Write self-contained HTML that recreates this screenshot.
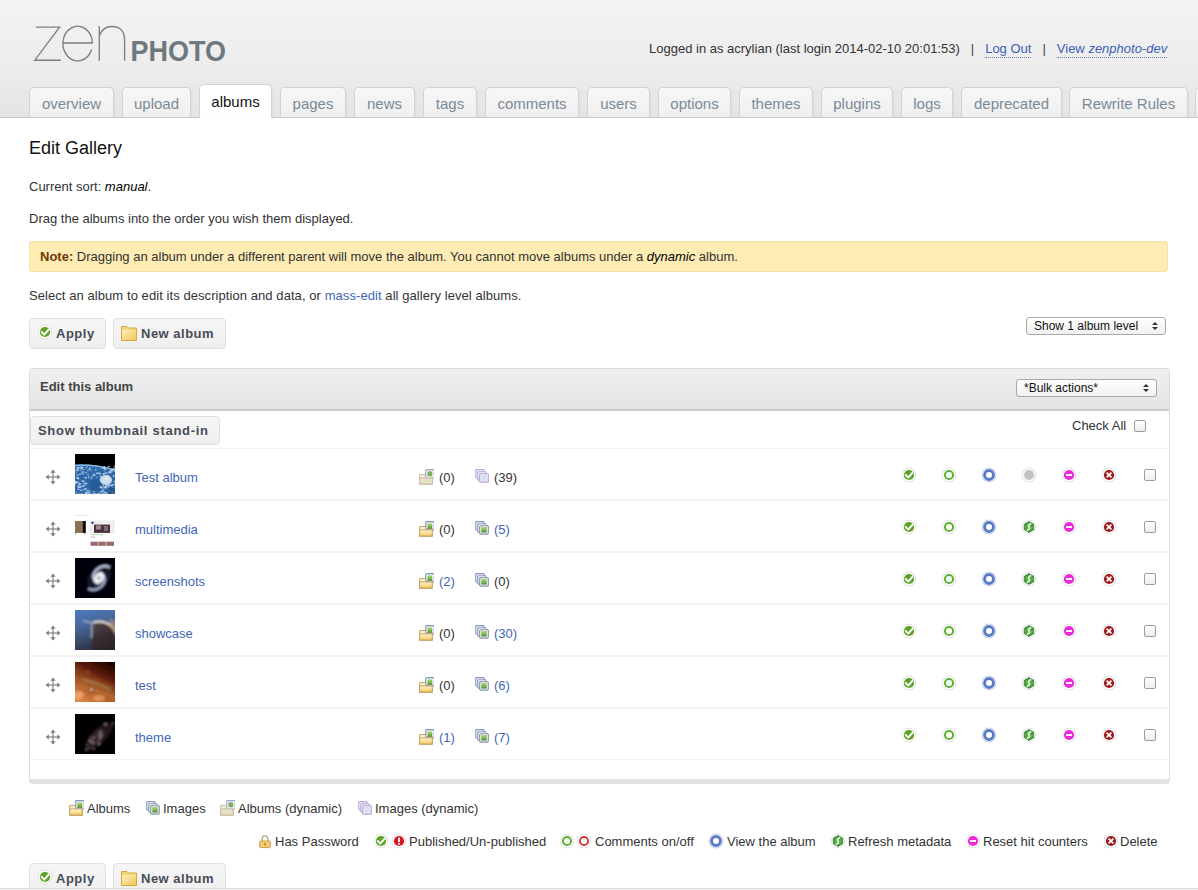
<!DOCTYPE html>
<html><head><meta charset="utf-8">
<style>
*{box-sizing:border-box;margin:0;padding:0}
html,body{width:1198px;height:890px;overflow:hidden;background:#fff}
body{font-family:"Liberation Sans",sans-serif;font-size:13px;color:#333;position:relative}
.abs{position:absolute}
.t{position:absolute;white-space:nowrap;font-size:13px;line-height:16px;color:#333}
.lnk{color:#3f66b8}
.ic{position:absolute;overflow:visible}
#hdr{position:absolute;left:0;top:0;width:1198px;height:118px;background:linear-gradient(#f3f3f3 0%,#ececec 60%,#e4e4e4 100%);border-bottom:1px solid #cbcbcb}
#login{position:absolute;left:649px;top:41px;font-size:13px;line-height:16px;color:#333;white-space:nowrap}
#login a{color:#3b5fb7;text-decoration:none;border-bottom:1px dotted #6a84c6;padding-bottom:1px}
#login .sp{margin:0 11px;color:#444}
.tab{position:absolute;top:87px;height:30px;background:linear-gradient(#f7f7f7,#efefef);border:1px solid #d3d3d3;border-bottom:none;border-radius:5px 5px 0 0;font-size:15px;color:#7b8a97;text-align:center;line-height:32px;box-shadow:1px 0 2px rgba(0,0,0,0.04)}
.tab.on{top:84px;height:34px;background:#fff;color:#111;line-height:33px}
h1{position:absolute;left:29px;top:138px;font-size:18px;line-height:21px;font-weight:normal;color:#111}
.p{position:absolute;left:29px;font-size:13px;line-height:16px;color:#333;white-space:nowrap}
.note{position:absolute;left:29px;top:241px;width:1139px;height:31px;background:#feecb4;border:1px solid #f7dea5;border-radius:3px;padding-left:10px;line-height:29px;color:#333;white-space:nowrap}
.note b{color:#6e3b06}
a{color:#3f66b8;text-decoration:none}
.btn{position:absolute;height:31px;background:linear-gradient(#f6f6f6,#efefef);border:1px solid #e0e0e0;border-radius:4px;font-weight:bold;font-size:13px;color:#474c54;line-height:29px;letter-spacing:0.5px;white-space:nowrap}
.btn .ic{top:7px}
.sel{position:absolute;height:18px;background:linear-gradient(#ffffff,#f1f1f1);border:1px solid #a8a8a8;border-radius:3px;font-size:12px;color:#111;line-height:16px;padding-left:7px;white-space:nowrap}
.sel:after{content:"";position:absolute;right:7px;top:4px;width:0;height:0;border-left:3px solid transparent;border-right:3px solid transparent;border-bottom:3px solid #333}
.sel:before{content:"";position:absolute;right:7px;top:9px;width:0;height:0;border-left:3px solid transparent;border-right:3px solid transparent;border-top:3px solid #333}
#panel{position:absolute;left:29px;top:368px;width:1141px;height:416px;border:1px solid #dcdcdc;border-bottom:5px solid #e2e2e2;border-radius:4px;background:#fff}
#ph{position:absolute;left:0;top:0;width:1139px;height:42px;background:linear-gradient(#f0f0f0,#e4e4e4);border-bottom:2px solid #cccccc;border-radius:4px 4px 0 0}
.sep{position:absolute;left:30px;width:1138px;height:1px;background:#f3f3f3}
.thumb{position:absolute;left:75px;width:40px;height:40px}
.name{color:#3f66b8}
.cb{position:absolute;width:12px;height:12px;border:1px solid #9c9c9c;border-radius:2px;background:linear-gradient(#ffffff,#ededed)}
.earth{background:radial-gradient(ellipse at 85% 60%,#e6eef5 0,#9fc3e0 12%,transparent 30%),radial-gradient(ellipse 120% 90% at 80% 110%,#2b5d8e 0,#3a74a8 55%,#5f9bcf 75%,#9ccbe8 80%,#000 82%)}
.multi{background:linear-gradient(#fff,#fff)}
.galaxy{background:radial-gradient(circle at 55% 48%,#fff 0,#d0d6e6 10%,#6a7aa0 24%,#1a2036 40%,#06070f 60%)}
.nebula{background:radial-gradient(ellipse at 70% 25%,#f4efe6 0,#b8a99a 12%,transparent 25%),linear-gradient(100deg,#4a6fa8 0%,#3f5f93 45%,#2d3d5e 70%,#201a1e 100%)}
.jupiter{background:radial-gradient(circle at 40% 70%,#f0c896 0,#e8a66a 8%,transparent 16%),linear-gradient(160deg,#6a2a08 0%,#b85a22 30%,#d98a4e 55%,#b4521c 75%,#7a2e0c 100%)}
.dark{background:radial-gradient(ellipse at 55% 50%,#6c5460 0,#3a2a30 25%,#120c10 55%,#050405 80%)}

</style></head><body>
<svg width="0" height="0" style="position:absolute">
<defs>
 <symbol id="halo" viewBox="0 0 16 16"><circle cx="8" cy="8" r="6.9" fill="#fbfbfb" stroke="#e2e2e2" stroke-width="1"/></symbol>
 <symbol id="chk" viewBox="0 0 16 16"><use href="#halo"/><circle cx="8" cy="8" r="5.1" fill="#5ba225"/><path d="M4.2,7.4 L7.3,10.6 L12,5.1" fill="none" stroke="#fff" stroke-width="2"/></symbol>
 <symbol id="ring_g" viewBox="0 0 16 16"><use href="#halo"/><circle cx="8" cy="8" r="4.1" fill="#fff" stroke="#56b42e" stroke-width="2"/></symbol>
 <symbol id="ring_b" viewBox="0 0 16 16"><circle cx="8" cy="8" r="6.9" fill="#fff" stroke="#cdd5ea" stroke-width="1.1"/><circle cx="8" cy="8" r="4.45" fill="#fff" stroke="#5a79c6" stroke-width="2.9"/></symbol>
 <symbol id="gray" viewBox="0 0 16 16"><use href="#halo"/><circle cx="8" cy="8" r="5" fill="#c4c4c4"/></symbol>
 <symbol id="refresh" viewBox="0 0 16 16"><use href="#halo"/><path d="M8,2.6 L12.7,5.3 V10.7 L8,13.4 L3.3,10.7 V5.3Z" fill="#3d8a35" stroke="#3d8a35" stroke-width="0.8" stroke-linejoin="round"/><circle cx="8" cy="8" r="3.8" fill="#5cb04c"/><path d="M10.2,4.4 Q6.4,6 8,8 Q9.6,10 5.8,11.6" fill="none" stroke="#fff" stroke-width="1.4"/></symbol>
 <symbol id="minus" viewBox="0 0 16 16"><use href="#halo"/><circle cx="8" cy="8" r="5.1" fill="#ec2ad8"/><rect x="5" y="7.1" width="6" height="1.9" fill="#fff"/></symbol>
 <symbol id="xdel" viewBox="0 0 16 16"><use href="#halo"/><circle cx="8" cy="8" r="5.1" fill="#9b1a1c"/><path d="M5.6,5.6 L10.4,10.4 M10.4,5.6 L5.6,10.4" stroke="#fff" stroke-width="1.7"/></symbol>
 <symbol id="excl" viewBox="0 0 16 16"><use href="#halo"/><circle cx="8" cy="8" r="5.1" fill="#d11a25"/><rect x="7.1" y="4.6" width="1.8" height="4.3" fill="#fff"/><rect x="7.1" y="9.9" width="1.8" height="1.7" fill="#fff"/></symbol>
 <symbol id="ring_r" viewBox="0 0 16 16"><use href="#halo"/><circle cx="8" cy="8" r="4.1" fill="#fff" stroke="#d43c3c" stroke-width="2"/></symbol>
 <symbol id="drag" viewBox="0 0 16 16"><g fill="#7c7c7c"><rect x="7.45" y="3" width="1.1" height="10"/><rect x="3" y="7.45" width="10" height="1.1"/><path d="M8,0.6 L10.6,3.8 L5.4,3.8Z M8,15.4 L10.6,12.2 L5.4,12.2Z M0.6,8 L3.8,5.4 L3.8,10.6Z M15.4,8 L12.2,5.4 L12.2,10.6Z"/></g></symbol>
 <symbol id="fold" viewBox="0 0 16 16"><linearGradient id="fy" x1="0" y1="0" x2="0" y2="1"><stop offset="0" stop-color="#fff8d0"/><stop offset="1" stop-color="#f0c860"/></linearGradient><linearGradient id="tg" x1="0" y1="0" x2="0" y2="1"><stop offset="0" stop-color="#b4e070"/><stop offset="1" stop-color="#5ca032"/></linearGradient><rect x="1.6" y="5.5" width="12.7" height="9.6" rx="0.6" fill="#fbf0c0" stroke="#c9a46a" stroke-width="1.1"/><rect x="7.7" y="0.6" width="8.6" height="8.4" rx="0.8" fill="#e6f0fa" stroke="#8796c0" stroke-width="1.1"/><rect x="9.4" y="2.2" width="4.8" height="5" rx="1.5" fill="url(#tg)"/><rect x="9" y="7" width="5.5" height="1" fill="#8a8a40"/><path d="M1.6,9 H14.3 V15.1 H1.6Z" fill="url(#fy)" stroke="#c9a46a" stroke-width="1.1"/></symbol>
 <symbol id="fold_dim" viewBox="0 0 16 16"><rect x="1.6" y="5.5" width="12.7" height="9.6" rx="0.6" fill="#f0eedc" stroke="#d0bca8" stroke-width="1.1"/><rect x="7.7" y="0.6" width="8.6" height="8.4" rx="0.8" fill="#eef0f6" stroke="#a6a8cc" stroke-width="1.1"/><rect x="9.4" y="2.2" width="4.8" height="5" rx="1.5" fill="#7cb060"/><path d="M1.6,9 H14.3 V15.1 H1.6Z" fill="#e4e2c4" stroke="#d0bca8" stroke-width="1.1"/></symbol>
 <symbol id="imgs" viewBox="0 0 16 16"><linearGradient id="tg2" x1="0" y1="0" x2="0" y2="1"><stop offset="0" stop-color="#b0dc6c"/><stop offset="1" stop-color="#4e9430"/></linearGradient><rect x="1.7" y="1.6" width="8.4" height="8.4" rx="0.8" fill="#eef4fb" stroke="#8e98b4" stroke-width="1.1"/><rect x="3.7" y="3.7" width="8.4" height="8.4" rx="0.8" fill="#eef4fb" stroke="#8e98b4" stroke-width="1.1"/><rect x="5.7" y="5.7" width="8.6" height="8.4" rx="0.8" fill="#eef4fb" stroke="#8690ac" stroke-width="1.1"/><rect x="7.3" y="7" width="5.4" height="5.6" fill="url(#tg2)"/></symbol>
 <symbol id="imgs_dim" viewBox="0 0 16 16"><rect x="1.7" y="1.6" width="8.4" height="8.4" rx="0.8" fill="#f4f0fa" stroke="#bcaad8" stroke-width="1.1"/><rect x="3.7" y="3.7" width="8.4" height="8.4" rx="0.8" fill="#f4f0fa" stroke="#bcaad8" stroke-width="1.1"/><rect x="5.7" y="5.7" width="8.6" height="8.4" rx="0.8" fill="#f4f0fa" stroke="#b4a2d4" stroke-width="1.1"/><rect x="7.3" y="7" width="5.4" height="5.6" fill="#d4e2f0"/></symbol>
 <symbol id="folder" viewBox="0 0 16 16"><linearGradient id="fg" x1="0" y1="0" x2="1" y2="1"><stop offset="0" stop-color="#fdf0b8"/><stop offset="1" stop-color="#f1c55a"/></linearGradient><path d="M0.5,1.5 H6 L7.5,3 H15.5 V15.5 H0.5Z" fill="#f5d87c" stroke="#d8a742"/><path d="M1,5 H15 V15 H1Z" fill="url(#fg)"/></symbol>
 <symbol id="lock" viewBox="0 0 16 16"><path d="M5.2,8 V5.6 A2.8,2.8 0 0 1 10.8,5.6 V8" fill="none" stroke="#b8a078" stroke-width="1.3"/><rect x="2.7" y="8" width="10.6" height="6.6" rx="0.8" fill="#f4cc70" stroke="#cfa050" stroke-width="1"/><rect x="7.3" y="10" width="1.4" height="2.4" fill="#a07830"/></symbol>
</defs>
</svg>
<div id="hdr">
  <svg class="ic" style="left:0;top:0" width="240" height="70" viewBox="0 0 240 70">
    <g fill="none" stroke="#7a7f84" stroke-width="1.35">
      <path d="M35.8,27.1 H59.6 L34.8,60.2 H60.8"/>
      <path d="M63,43 H92.5 M92.5,43 A14.8,17.3 0 1 0 91.6,49.5"/>
      <path d="M99.3,26.3 V60.8 M99.3,36 C101.5,29.5 106,26.5 112,26.5 C120,26.5 124.6,31.5 124.6,40 V60.8"/>
    </g>
    <text x="130.5" y="60.8" font-family="Liberation Sans" font-size="29.7" font-weight="bold" fill="#6e787f" textLength="95.5" lengthAdjust="spacingAndGlyphs">PHOTO</text>
  </svg>
  <div id="login">Logged in as acrylian (last login 2014-02-10 20:01:53)<span class="sp">|</span><a>Log Out</a><span class="sp">|</span><a>View <i>zenphoto-dev</i></a></div>
  <div class="tab" style="left:29px;width:85px">overview</div>
  <div class="tab" style="left:122px;width:69px">upload</div>
  <div class="tab on" style="left:199px;width:73px">albums</div>
  <div class="tab" style="left:280px;width:66px">pages</div>
  <div class="tab" style="left:354px;width:61px">news</div>
  <div class="tab" style="left:423px;width:54px">tags</div>
  <div class="tab" style="left:485px;width:94px">comments</div>
  <div class="tab" style="left:587px;width:63px">users</div>
  <div class="tab" style="left:658px;width:73px">options</div>
  <div class="tab" style="left:739px;width:74px">themes</div>
  <div class="tab" style="left:821px;width:72px">plugins</div>
  <div class="tab" style="left:901px;width:52px">logs</div>
  <div class="tab" style="left:961px;width:101px">deprecated</div>
  <div class="tab" style="left:1069px;width:119px">Rewrite Rules</div>
  <div class="tab" style="left:1195px;width:40px"></div>
</div>
<h1>Edit Gallery</h1>
<div class="p" style="top:179px">Current sort: <i style="color:#000">manual</i>.</div>
<div class="p" style="top:211px">Drag the albums into the order you wish them displayed.</div>
<div class="note"><b>Note:</b> Dragging an album under a different parent will move the album. You cannot move albums under a <i style="color:#000">dynamic</i> album.</div>
<div class="p" style="top:288px;letter-spacing:0.07px">Select an album to edit its description and data, or <a>mass-edit</a> all gallery level albums.</div>
<div class="btn" style="left:29px;top:318px;width:77px"><svg class="ic" style="left:7px;top:5px" width="16" height="16"><use href="#chk"/></svg><span class="abs" style="left:26px;top:0px">Apply</span></div>
<div class="btn" style="left:113px;top:318px;width:113px"><svg class="ic" style="left:7px;top:6px" width="16" height="16"><use href="#folder"/></svg><span class="abs" style="left:27px;top:0px">New album</span></div>
<div class="sel" style="left:1026px;top:317px;width:140px">Show 1 album level</div>
<div id="panel">
  <div id="ph"></div>
</div>
<div class="abs" style="left:40px;top:379px;font-weight:bold;color:#444;line-height:16px">Edit this album</div>
<div class="sel" style="left:1016px;top:379px;width:141px">*Bulk actions*</div>
<div class="btn" style="left:30px;top:416px;width:190px;height:29px;line-height:27px;letter-spacing:0.7px">&nbsp;<span class="abs" style="left:7px;top:0">Show thumbnail stand-in</span></div>
<div class="t" style="left:1072px;top:418px">Check All</div>
<div class="cb" style="left:1134px;top:420px"></div>
<div class="sep" style="top:448px"></div>
<svg class="ic" style="left:44.5px;top:468.5px" width="16" height="16"><use href="#drag"/></svg>
<div class="thumb" style="top:454px"><svg width="40" height="40" viewBox="0 0 40 40" style="display:block"><defs><filter id="fe" x="-10%" y="-10%" width="120%" height="120%"><feGaussianBlur stdDeviation="0.5"/></filter></defs><g filter="url(#fe)"><rect x="-2" y="-2" width="44" height="44" fill="#020306"/><path d="M-2,11 Q16,9 42,16 V42 H-2Z" fill="#2f68a8"/><path d="M-2,11.5 Q16,9.5 42,16.5" fill="none" stroke="#86b8e2" stroke-width="1.4"/><ellipse cx="21" cy="31" rx="7" ry="6" fill="#1f4c88" opacity="0.45"/><ellipse cx="31" cy="26" rx="6" ry="5" fill="#c8dcec"/><ellipse cx="32" cy="24.5" rx="2.5" ry="2" fill="#f2ece6"/><ellipse cx="38.6" cy="33.5" rx="1.7" ry="0.5" fill="#c8e0f4" opacity="0.58"/><ellipse cx="38.6" cy="30.8" rx="1.7" ry="0.6" fill="#c8e0f4" opacity="0.58"/><ellipse cx="9.4" cy="27.8" rx="1.3" ry="0.5" fill="#c8e0f4" opacity="0.46"/><ellipse cx="10.7" cy="38.6" rx="1.5" ry="0.6" fill="#c8e0f4" opacity="0.75"/><ellipse cx="4.8" cy="29.9" rx="0.8" ry="0.5" fill="#c8e0f4" opacity="0.79"/><ellipse cx="7.8" cy="18.2" rx="1.8" ry="1.1" fill="#c8e0f4" opacity="0.49"/><ellipse cx="39.4" cy="27.6" rx="1.4" ry="0.6" fill="#c8e0f4" opacity="0.82"/><ellipse cx="28.0" cy="40.0" rx="1.7" ry="0.7" fill="#c8e0f4" opacity="0.53"/><ellipse cx="6.0" cy="16.2" rx="0.7" ry="0.7" fill="#c8e0f4" opacity="0.65"/><ellipse cx="-0.9" cy="31.7" rx="1.0" ry="0.7" fill="#c8e0f4" opacity="0.76"/><ellipse cx="19.2" cy="21.2" rx="1.2" ry="1.0" fill="#c8e0f4" opacity="0.38"/><ellipse cx="40.0" cy="12.7" rx="1.5" ry="1.1" fill="#c8e0f4" opacity="0.36"/><ellipse cx="32.1" cy="22.6" rx="1.3" ry="0.5" fill="#c8e0f4" opacity="0.37"/><ellipse cx="6.6" cy="39.7" rx="0.8" ry="1.0" fill="#c8e0f4" opacity="0.81"/><ellipse cx="38.6" cy="22.0" rx="1.0" ry="0.9" fill="#c8e0f4" opacity="0.74"/><ellipse cx="3.5" cy="33.7" rx="1.6" ry="1.1" fill="#c8e0f4" opacity="0.37"/><ellipse cx="38.7" cy="14.6" rx="1.0" ry="0.9" fill="#c8e0f4" opacity="0.81"/><ellipse cx="13.3" cy="38.8" rx="1.3" ry="0.7" fill="#c8e0f4" opacity="0.51"/><ellipse cx="6.5" cy="14.3" rx="0.8" ry="1.0" fill="#c8e0f4" opacity="0.85"/><ellipse cx="5.8" cy="13.4" rx="1.8" ry="0.9" fill="#c8e0f4" opacity="0.55"/><ellipse cx="9.0" cy="29.2" rx="1.6" ry="0.8" fill="#c8e0f4" opacity="0.56"/><ellipse cx="1.3" cy="38.6" rx="0.6" ry="0.8" fill="#c8e0f4" opacity="0.77"/><ellipse cx="4.5" cy="33.2" rx="1.7" ry="0.9" fill="#c8e0f4" opacity="0.74"/><ellipse cx="3.5" cy="24.6" rx="0.8" ry="1.1" fill="#c8e0f4" opacity="0.50"/><ellipse cx="18.0" cy="41.0" rx="1.6" ry="1.2" fill="#c8e0f4" opacity="0.58"/><ellipse cx="11.2" cy="23.7" rx="0.8" ry="0.8" fill="#c8e0f4" opacity="0.84"/><ellipse cx="39.3" cy="30.2" rx="1.2" ry="0.7" fill="#c8e0f4" opacity="0.39"/><ellipse cx="10.4" cy="34.7" rx="1.6" ry="0.8" fill="#c8e0f4" opacity="0.74"/><ellipse cx="31.5" cy="32.1" rx="1.4" ry="1.0" fill="#c8e0f4" opacity="0.53"/><ellipse cx="28.6" cy="20.1" rx="1.2" ry="1.0" fill="#c8e0f4" opacity="0.70"/><ellipse cx="11.3" cy="39.4" rx="1.4" ry="0.9" fill="#c8e0f4" opacity="0.36"/><ellipse cx="22.0" cy="19.3" rx="1.4" ry="0.8" fill="#c8e0f4" opacity="0.76"/><ellipse cx="26.1" cy="33.4" rx="1.0" ry="1.1" fill="#c8e0f4" opacity="0.78"/><ellipse cx="27.9" cy="40.3" rx="1.7" ry="0.9" fill="#c8e0f4" opacity="0.61"/><ellipse cx="6.0" cy="36.3" rx="1.7" ry="0.8" fill="#c8e0f4" opacity="0.70"/><ellipse cx="29.2" cy="33.2" rx="0.8" ry="1.0" fill="#c8e0f4" opacity="0.64"/><ellipse cx="27.0" cy="24.2" rx="1.3" ry="1.0" fill="#c8e0f4" opacity="0.67"/><ellipse cx="29.3" cy="12.8" rx="0.8" ry="0.8" fill="#c8e0f4" opacity="0.68"/><ellipse cx="8.2" cy="31.9" rx="1.4" ry="0.5" fill="#c8e0f4" opacity="0.59"/><ellipse cx="8.5" cy="13.6" rx="0.8" ry="0.7" fill="#c8e0f4" opacity="0.44"/><ellipse cx="7.1" cy="13.0" rx="1.2" ry="0.8" fill="#c8e0f4" opacity="0.66"/><ellipse cx="23.8" cy="18.9" rx="1.7" ry="0.5" fill="#c8e0f4" opacity="0.55"/><ellipse cx="10.7" cy="23.9" rx="0.7" ry="1.1" fill="#c8e0f4" opacity="0.54"/><ellipse cx="0.5" cy="29.8" rx="0.7" ry="0.9" fill="#c8e0f4" opacity="0.52"/><ellipse cx="23.4" cy="39.8" rx="1.6" ry="0.8" fill="#c8e0f4" opacity="0.76"/><ellipse cx="26.0" cy="22.7" rx="0.8" ry="0.9" fill="#c8e0f4" opacity="0.63"/><ellipse cx="39.2" cy="40.1" rx="1.3" ry="0.7" fill="#c8e0f4" opacity="0.80"/><ellipse cx="-1.0" cy="15.1" rx="1.3" ry="0.9" fill="#c8e0f4" opacity="0.42"/><ellipse cx="25.4" cy="37.8" rx="1.1" ry="0.8" fill="#c8e0f4" opacity="0.46"/><ellipse cx="11.2" cy="40.2" rx="1.1" ry="1.2" fill="#c8e0f4" opacity="0.81"/><ellipse cx="24.0" cy="19.5" rx="1.8" ry="0.8" fill="#c8e0f4" opacity="0.56"/><ellipse cx="12.4" cy="40.5" rx="1.2" ry="0.7" fill="#c8e0f4" opacity="0.59"/><ellipse cx="4.1" cy="30.0" rx="1.1" ry="0.7" fill="#c8e0f4" opacity="0.74"/><ellipse cx="33.7" cy="12.4" rx="1.2" ry="0.7" fill="#c8e0f4" opacity="0.82"/><ellipse cx="31.8" cy="19.1" rx="0.9" ry="0.6" fill="#c8e0f4" opacity="0.84"/><ellipse cx="11.3" cy="29.6" rx="1.2" ry="1.0" fill="#c8e0f4" opacity="0.65"/><ellipse cx="30.2" cy="15.4" rx="1.5" ry="0.7" fill="#c8e0f4" opacity="0.62"/><ellipse cx="13.1" cy="20.6" rx="1.2" ry="0.8" fill="#c8e0f4" opacity="0.53"/><ellipse cx="30.3" cy="29.1" rx="0.6" ry="0.7" fill="#c8e0f4" opacity="0.58"/><ellipse cx="37.5" cy="37.8" rx="1.3" ry="0.5" fill="#c8e0f4" opacity="0.74"/><ellipse cx="25.6" cy="26.0" rx="1.7" ry="0.8" fill="#c8e0f4" opacity="0.55"/><ellipse cx="34.8" cy="17.7" rx="1.0" ry="1.1" fill="#c8e0f4" opacity="0.38"/><ellipse cx="34.1" cy="32.1" rx="1.1" ry="0.7" fill="#c8e0f4" opacity="0.74"/><ellipse cx="37.2" cy="16.1" rx="1.2" ry="0.9" fill="#c8e0f4" opacity="0.60"/><ellipse cx="12.9" cy="16.5" rx="1.3" ry="1.1" fill="#c8e0f4" opacity="0.38"/><ellipse cx="8.7" cy="35.8" rx="1.6" ry="1.0" fill="#c8e0f4" opacity="0.36"/><ellipse cx="29.3" cy="40.4" rx="1.8" ry="1.0" fill="#c8e0f4" opacity="0.37"/><ellipse cx="34.4" cy="18.4" rx="1.4" ry="1.2" fill="#c8e0f4" opacity="0.71"/><ellipse cx="4.7" cy="20.5" rx="1.7" ry="0.6" fill="#c8e0f4" opacity="0.66"/><ellipse cx="16.4" cy="16.7" rx="1.3" ry="0.5" fill="#c8e0f4" opacity="0.40"/><ellipse cx="14.9" cy="14.1" rx="0.7" ry="0.9" fill="#c8e0f4" opacity="0.72"/><ellipse cx="35.9" cy="15.9" rx="1.1" ry="0.7" fill="#c8e0f4" opacity="0.65"/><ellipse cx="19.6" cy="39.2" rx="1.0" ry="0.5" fill="#c8e0f4" opacity="0.70"/><ellipse cx="5.3" cy="30.3" rx="1.2" ry="1.1" fill="#c8e0f4" opacity="0.63"/><ellipse cx="25.1" cy="19.6" rx="1.3" ry="0.7" fill="#c8e0f4" opacity="0.73"/><ellipse cx="20.7" cy="15.9" rx="0.9" ry="0.8" fill="#c8e0f4" opacity="0.72"/><ellipse cx="6.5" cy="32.7" rx="1.4" ry="0.6" fill="#c8e0f4" opacity="0.68"/><ellipse cx="2.8" cy="15.6" rx="1.3" ry="0.7" fill="#c8e0f4" opacity="0.79"/><ellipse cx="19.2" cy="21.4" rx="1.6" ry="0.5" fill="#c8e0f4" opacity="0.71"/><ellipse cx="1.3" cy="16.4" rx="1.7" ry="1.0" fill="#c8e0f4" opacity="0.46"/><ellipse cx="3.9" cy="40.2" rx="1.4" ry="1.1" fill="#c8e0f4" opacity="0.42"/><ellipse cx="25.2" cy="22.3" rx="0.9" ry="0.7" fill="#c8e0f4" opacity="0.66"/><ellipse cx="13.6" cy="23.2" rx="0.8" ry="1.1" fill="#c8e0f4" opacity="0.67"/><ellipse cx="32.8" cy="24.6" rx="1.6" ry="0.9" fill="#c8e0f4" opacity="0.65"/><ellipse cx="3.1" cy="13.0" rx="0.8" ry="0.5" fill="#c8e0f4" opacity="0.79"/><ellipse cx="18.7" cy="37.8" rx="1.3" ry="0.8" fill="#c8e0f4" opacity="0.58"/><ellipse cx="3.2" cy="16.5" rx="0.8" ry="0.8" fill="#c8e0f4" opacity="0.54"/><ellipse cx="36.0" cy="16.4" rx="0.9" ry="0.7" fill="#c8e0f4" opacity="0.43"/><ellipse cx="11.1" cy="18.8" rx="1.2" ry="0.5" fill="#c8e0f4" opacity="0.81"/><ellipse cx="14.5" cy="39.2" rx="1.4" ry="1.0" fill="#c8e0f4" opacity="0.59"/><ellipse cx="38.7" cy="15.4" rx="1.4" ry="0.7" fill="#c8e0f4" opacity="0.69"/><ellipse cx="29.6" cy="16.7" rx="0.8" ry="0.5" fill="#c8e0f4" opacity="0.47"/><ellipse cx="2.3" cy="23.6" rx="1.8" ry="0.8" fill="#c8e0f4" opacity="0.51"/><ellipse cx="18.7" cy="20.2" rx="1.5" ry="1.0" fill="#c8e0f4" opacity="0.43"/><ellipse cx="9.1" cy="31.5" rx="1.7" ry="1.0" fill="#c8e0f4" opacity="0.57"/><ellipse cx="40.0" cy="12.2" rx="0.7" ry="1.0" fill="#c8e0f4" opacity="0.56"/><ellipse cx="0.9" cy="27.9" rx="1.8" ry="0.9" fill="#c8e0f4" opacity="0.53"/><ellipse cx="2.9" cy="14.1" rx="1.7" ry="0.8" fill="#c8e0f4" opacity="0.82"/><ellipse cx="1.3" cy="19.1" rx="0.7" ry="0.8" fill="#c8e0f4" opacity="0.38"/><ellipse cx="9.7" cy="23.8" rx="1.0" ry="0.5" fill="#c8e0f4" opacity="0.37"/><ellipse cx="39.8" cy="17.2" rx="1.2" ry="0.8" fill="#c8e0f4" opacity="0.62"/><ellipse cx="2.5" cy="21.1" rx="0.7" ry="0.9" fill="#c8e0f4" opacity="0.81"/><ellipse cx="-0.3" cy="27.6" rx="1.2" ry="0.9" fill="#c8e0f4" opacity="0.54"/><ellipse cx="25.3" cy="33.0" rx="1.0" ry="0.8" fill="#c8e0f4" opacity="0.76"/><ellipse cx="8.4" cy="15.4" rx="1.0" ry="0.6" fill="#c8e0f4" opacity="0.74"/><ellipse cx="33.4" cy="21.1" rx="0.8" ry="0.6" fill="#c8e0f4" opacity="0.47"/><ellipse cx="2.5" cy="24.4" rx="1.3" ry="0.7" fill="#c8e0f4" opacity="0.38"/><ellipse cx="28.4" cy="13.4" rx="0.8" ry="0.7" fill="#c8e0f4" opacity="0.54"/><ellipse cx="3.1" cy="24.2" rx="1.0" ry="1.0" fill="#c8e0f4" opacity="0.63"/><ellipse cx="36.6" cy="31.0" rx="1.5" ry="0.9" fill="#c8e0f4" opacity="0.57"/><ellipse cx="33.3" cy="31.0" rx="1.7" ry="1.0" fill="#c8e0f4" opacity="0.70"/><ellipse cx="10.2" cy="35.6" rx="1.1" ry="0.6" fill="#c8e0f4" opacity="0.38"/><ellipse cx="6.1" cy="19.6" rx="1.4" ry="0.7" fill="#c8e0f4" opacity="0.38"/><ellipse cx="31.1" cy="28.2" rx="0.6" ry="0.5" fill="#c8e0f4" opacity="0.42"/><ellipse cx="14.0" cy="36.9" rx="1.7" ry="0.9" fill="#c8e0f4" opacity="0.47"/><ellipse cx="17.0" cy="22.5" rx="1.0" ry="0.5" fill="#c8e0f4" opacity="0.64"/><ellipse cx="33.7" cy="33.1" rx="0.7" ry="0.9" fill="#c8e0f4" opacity="0.44"/><ellipse cx="28.8" cy="24.9" rx="1.7" ry="1.1" fill="#c8e0f4" opacity="0.41"/><ellipse cx="12.3" cy="38.5" rx="1.2" ry="0.8" fill="#c8e0f4" opacity="0.57"/><ellipse cx="31.2" cy="39.2" rx="1.2" ry="1.2" fill="#c8e0f4" opacity="0.65"/><ellipse cx="3.3" cy="35.6" rx="1.1" ry="0.5" fill="#c8e0f4" opacity="0.84"/><ellipse cx="0.4" cy="28.7" rx="1.2" ry="1.1" fill="#c8e0f4" opacity="0.55"/><ellipse cx="8.1" cy="20.0" rx="0.8" ry="0.9" fill="#c8e0f4" opacity="0.53"/><ellipse cx="30.5" cy="19.0" rx="1.0" ry="0.7" fill="#c8e0f4" opacity="0.84"/><ellipse cx="34.3" cy="36.6" rx="1.3" ry="0.8" fill="#c8e0f4" opacity="0.42"/><ellipse cx="33.9" cy="26.2" rx="0.6" ry="0.6" fill="#c8e0f4" opacity="0.40"/><ellipse cx="29.1" cy="38.1" rx="0.8" ry="1.1" fill="#c8e0f4" opacity="0.51"/><ellipse cx="27.7" cy="37.0" rx="1.3" ry="1.1" fill="#c8e0f4" opacity="0.54"/><ellipse cx="-0.6" cy="26.8" rx="1.3" ry="0.6" fill="#c8e0f4" opacity="0.54"/><ellipse cx="12.3" cy="12.8" rx="1.0" ry="0.8" fill="#c8e0f4" opacity="0.59"/><ellipse cx="28.5" cy="23.6" rx="1.8" ry="1.1" fill="#c8e0f4" opacity="0.81"/><ellipse cx="28.1" cy="31.4" rx="1.2" ry="1.1" fill="#c8e0f4" opacity="0.53"/><ellipse cx="10.9" cy="14.3" rx="0.7" ry="0.7" fill="#c8e0f4" opacity="0.64"/><ellipse cx="30.9" cy="32.7" rx="1.0" ry="1.2" fill="#c8e0f4" opacity="0.49"/><ellipse cx="29.1" cy="14.1" rx="1.5" ry="1.0" fill="#c8e0f4" opacity="0.83"/><ellipse cx="36.7" cy="31.9" rx="1.6" ry="1.0" fill="#c8e0f4" opacity="0.66"/><ellipse cx="7.8" cy="27.0" rx="1.7" ry="0.7" fill="#c8e0f4" opacity="0.84"/><ellipse cx="21.8" cy="23.4" rx="0.6" ry="0.8" fill="#c8e0f4" opacity="0.44"/><ellipse cx="26.4" cy="38.1" rx="1.7" ry="0.9" fill="#c8e0f4" opacity="0.54"/><ellipse cx="3.6" cy="32.0" rx="1.3" ry="1.0" fill="#c8e0f4" opacity="0.54"/><ellipse cx="36.2" cy="18.2" rx="1.0" ry="0.7" fill="#c8e0f4" opacity="0.66"/><ellipse cx="36.7" cy="16.9" rx="1.4" ry="1.0" fill="#c8e0f4" opacity="0.46"/><ellipse cx="1.6" cy="28.4" rx="1.6" ry="1.1" fill="#c8e0f4" opacity="0.71"/><ellipse cx="16.5" cy="24.3" rx="1.2" ry="1.1" fill="#c8e0f4" opacity="0.50"/><ellipse cx="10.8" cy="29.6" rx="1.8" ry="0.6" fill="#c8e0f4" opacity="0.37"/><ellipse cx="3.9" cy="28.3" rx="1.3" ry="0.6" fill="#c8e0f4" opacity="0.45"/><ellipse cx="29.6" cy="13.8" rx="1.2" ry="1.1" fill="#c8e0f4" opacity="0.83"/><ellipse cx="12.4" cy="36.7" rx="1.4" ry="1.1" fill="#c8e0f4" opacity="0.46"/><ellipse cx="28.3" cy="36.4" rx="1.2" ry="0.6" fill="#c8e0f4" opacity="0.45"/><ellipse cx="5.6" cy="14.7" rx="0.8" ry="0.9" fill="#c8e0f4" opacity="0.40"/><ellipse cx="30.8" cy="33.4" rx="1.6" ry="1.1" fill="#c8e0f4" opacity="0.71"/><ellipse cx="37.8" cy="39.8" rx="1.4" ry="1.2" fill="#c8e0f4" opacity="0.40"/><ellipse cx="3.3" cy="13.9" rx="0.8" ry="0.8" fill="#c8e0f4" opacity="0.58"/><ellipse cx="27.6" cy="33.5" rx="0.7" ry="0.8" fill="#c8e0f4" opacity="0.62"/><ellipse cx="14.8" cy="15.4" rx="1.3" ry="0.8" fill="#c8e0f4" opacity="0.69"/><ellipse cx="19.8" cy="39.9" rx="1.7" ry="0.6" fill="#c8e0f4" opacity="0.73"/><ellipse cx="29.3" cy="20.6" rx="0.7" ry="0.8" fill="#c8e0f4" opacity="0.53"/><ellipse cx="30.0" cy="38.6" rx="1.1" ry="0.7" fill="#c8e0f4" opacity="0.60"/><ellipse cx="28.3" cy="34.9" rx="1.3" ry="0.7" fill="#c8e0f4" opacity="0.52"/><ellipse cx="34.6" cy="27.1" rx="0.7" ry="0.8" fill="#c8e0f4" opacity="0.47"/><ellipse cx="27.0" cy="14.1" rx="0.9" ry="0.6" fill="#c8e0f4" opacity="0.59"/><ellipse cx="38" cy="37" rx="5" ry="5" fill="#1a3f70" opacity="0.5"/></g></svg></div>
<div class="t name" style="left:135px;top:470px">Test album</div>
<svg class="ic" style="left:418px;top:469px" width="16" height="16"><use href="#fold_dim"/></svg>
<div class="t" style="left:439px;top:470px">(0)</div>
<svg class="ic" style="left:474px;top:468px" width="16" height="16"><use href="#imgs_dim"/></svg>
<div class="t" style="left:494px;top:470px">(39)</div>
<svg class="ic" style="left:901px;top:467px" width="16" height="16"><use href="#chk"/></svg>
<svg class="ic" style="left:941px;top:467px" width="16" height="16"><use href="#ring_g"/></svg>
<svg class="ic" style="left:981px;top:467px" width="16" height="16"><use href="#ring_b"/></svg>
<svg class="ic" style="left:1021px;top:467px" width="16" height="16"><use href="#gray"/></svg>
<svg class="ic" style="left:1061px;top:467px" width="16" height="16"><use href="#minus"/></svg>
<svg class="ic" style="left:1101px;top:467px" width="16" height="16"><use href="#xdel"/></svg>
<div class="cb" style="left:1144px;top:469px"></div>
<div class="sep" style="top:499px;height:2px"></div>
<svg class="ic" style="left:44.5px;top:520.5px" width="16" height="16"><use href="#drag"/></svg>
<div class="thumb" style="top:506px"><svg width="40" height="40" viewBox="0 0 40 40" style="display:block"><defs><filter id="fm" x="-10%" y="-10%" width="120%" height="120%"><feGaussianBlur stdDeviation="0.35"/></filter></defs><g filter="url(#fm)"><rect x="-2" y="-2" width="44" height="44" fill="#fff"/><rect x="0" y="15" width="7.5" height="12" fill="#8d7352"/><rect x="7.5" y="15" width="3.3" height="12" fill="#0a0808"/><rect x="14.8" y="14.5" width="25" height="13" fill="#ededf0"/><rect x="19" y="18.6" width="16" height="8.3" fill="#4d333b"/><rect x="21" y="19.5" width="5" height="4" fill="#a08890"/><rect x="29" y="20" width="4" height="5" fill="#7a6a80"/><circle cx="17.5" cy="16.8" r="1.2" fill="#2a3a90"/><rect x="15.5" y="35.7" width="23.5" height="4.1" fill="#9a6a68"/><rect x="22.8" y="35.7" width="0.8" height="4.1" fill="#ddd"/><rect x="30.6" y="35.7" width="0.8" height="4.1" fill="#ddd"/><rect x="0" y="9" width="14" height="0.8" fill="#e4e4e4"/><rect x="16" y="28.3" width="12" height="0.9" fill="#a9dbb4"/><rect x="15.5" y="30.6" width="5" height="0.9" fill="#bbb"/><rect x="0" y="27.6" width="1.5" height="0.8" fill="#888"/><rect x="9" y="27.6" width="1.5" height="0.8" fill="#888"/></g></svg></div>
<div class="t name" style="left:135px;top:522px">multimedia</div>
<svg class="ic" style="left:418px;top:521px" width="16" height="16"><use href="#fold"/></svg>
<div class="t" style="left:439px;top:522px">(0)</div>
<svg class="ic" style="left:474px;top:520px" width="16" height="16"><use href="#imgs"/></svg>
<div class="t lnk" style="left:494px;top:522px">(5)</div>
<svg class="ic" style="left:901px;top:519px" width="16" height="16"><use href="#chk"/></svg>
<svg class="ic" style="left:941px;top:519px" width="16" height="16"><use href="#ring_g"/></svg>
<svg class="ic" style="left:981px;top:519px" width="16" height="16"><use href="#ring_b"/></svg>
<svg class="ic" style="left:1021px;top:519px" width="16" height="16"><use href="#refresh"/></svg>
<svg class="ic" style="left:1061px;top:519px" width="16" height="16"><use href="#minus"/></svg>
<svg class="ic" style="left:1101px;top:519px" width="16" height="16"><use href="#xdel"/></svg>
<div class="cb" style="left:1144px;top:521px"></div>
<div class="sep" style="top:551px;height:2px"></div>
<svg class="ic" style="left:44.5px;top:572.5px" width="16" height="16"><use href="#drag"/></svg>
<div class="thumb" style="top:558px"><svg width="40" height="40" viewBox="0 0 40 40" style="display:block"><defs><filter id="fg2" x="-10%" y="-10%" width="120%" height="120%"><feGaussianBlur stdDeviation="0.95"/></filter></defs><g filter="url(#fg2)"><rect x="-2" y="-2" width="44" height="44" fill="#03040c"/><ellipse cx="24" cy="20" rx="14" ry="10" fill="#161a30" opacity="0.9" transform="rotate(-50 24 20)"/><path d="M25.9,17.7 L26.3,17.5 L26.8,17.5 L27.3,17.5 L27.7,17.7 L28.2,17.9 L28.6,18.2 L29.0,18.6 L29.3,19.1 L29.5,19.7 L29.6,20.4 L29.7,21.2 L29.6,22.0 L29.5,22.9 L29.2,23.8 L28.8,24.7 L28.3,25.7 L27.7,26.6 L27.0,27.5 L26.1,28.4 L25.2,29.2 L24.2,29.9 L23.1,30.6 L21.9,31.1 L20.7,31.5 L19.4,31.7 L18.2,31.8 L16.9,31.7 L15.7,31.5 L14.5,31.1 L13.4,30.5" fill="none" stroke="#aab4d4" stroke-width="2.3"/><path d="M22.1,22.4 L21.7,22.5 L21.2,22.5 L20.7,22.5 L20.3,22.4 L19.8,22.1 L19.4,21.8 L19.0,21.4 L18.7,20.9 L18.5,20.3 L18.4,19.6 L18.3,18.8 L18.4,18.0 L18.5,17.1 L18.8,16.2 L19.2,15.3 L19.7,14.3 L20.3,13.4 L21.0,12.5 L21.8,11.6 L22.8,10.8 L23.8,10.1 L24.9,9.4 L26.1,8.9 L27.3,8.5 L28.5,8.3 L29.8,8.2 L31.1,8.2 L32.3,8.5 L33.5,8.9 L34.6,9.5" fill="none" stroke="#c4cce4" stroke-width="2.3"/><ellipse cx="24" cy="20" rx="6.5" ry="4.6" fill="#eef0f8" transform="rotate(-55 24 20)"/><ellipse cx="24" cy="20" rx="1.6" ry="1.4" fill="#8a8a88"/></g></svg></div>
<div class="t name" style="left:135px;top:574px">screenshots</div>
<svg class="ic" style="left:418px;top:573px" width="16" height="16"><use href="#fold"/></svg>
<div class="t lnk" style="left:439px;top:574px">(2)</div>
<svg class="ic" style="left:474px;top:572px" width="16" height="16"><use href="#imgs"/></svg>
<div class="t" style="left:494px;top:574px">(0)</div>
<svg class="ic" style="left:901px;top:571px" width="16" height="16"><use href="#chk"/></svg>
<svg class="ic" style="left:941px;top:571px" width="16" height="16"><use href="#ring_g"/></svg>
<svg class="ic" style="left:981px;top:571px" width="16" height="16"><use href="#ring_b"/></svg>
<svg class="ic" style="left:1021px;top:571px" width="16" height="16"><use href="#refresh"/></svg>
<svg class="ic" style="left:1061px;top:571px" width="16" height="16"><use href="#minus"/></svg>
<svg class="ic" style="left:1101px;top:571px" width="16" height="16"><use href="#xdel"/></svg>
<div class="cb" style="left:1144px;top:573px"></div>
<div class="sep" style="top:603px;height:2px"></div>
<svg class="ic" style="left:44.5px;top:624.5px" width="16" height="16"><use href="#drag"/></svg>
<div class="thumb" style="top:610px"><svg width="40" height="40" viewBox="0 0 40 40" style="display:block"><defs><filter id="fn" x="-10%" y="-10%" width="120%" height="120%"><feGaussianBlur stdDeviation="0.8"/></filter></defs><g filter="url(#fn)"><linearGradient id="nbg" x1="0" y1="0" x2="0.3" y2="1"><stop offset="0" stop-color="#4f7cc4"/><stop offset="0.4" stop-color="#4a6aa0"/><stop offset="0.75" stop-color="#3a4866"/><stop offset="1" stop-color="#2c3244"/></linearGradient><linearGradient id="nmg" x1="0" y1="0" x2="0.4" y2="1"><stop offset="0" stop-color="#5a4a4c"/><stop offset="0.5" stop-color="#3a3034"/><stop offset="1" stop-color="#2a2426"/></linearGradient><rect x="-2" y="-2" width="44" height="44" fill="url(#nbg)"/><path d="M34,8 Q40,10 42,14 V30 Q38,20 34,8Z" fill="#b09488" opacity="0.7"/><path d="M17,13 Q28,10 38,17 Q41,22 42,28 V42 H17Z" fill="url(#nmg)"/><path d="M18,12.5 Q28,9.5 37,16" fill="none" stroke="#f4eee0" stroke-width="1.8"/><path d="M35,15 Q39,19 42,24" fill="none" stroke="#c49a7c" stroke-width="2.5"/><path d="M8,11 L18,13" fill="none" stroke="#c6d4ea" stroke-width="0.9"/><path d="M17,14 L16.5,28" fill="none" stroke="#9aaccc" stroke-width="1.4"/></g></svg></div>
<div class="t name" style="left:135px;top:626px">showcase</div>
<svg class="ic" style="left:418px;top:625px" width="16" height="16"><use href="#fold"/></svg>
<div class="t" style="left:439px;top:626px">(0)</div>
<svg class="ic" style="left:474px;top:624px" width="16" height="16"><use href="#imgs"/></svg>
<div class="t lnk" style="left:494px;top:626px">(30)</div>
<svg class="ic" style="left:901px;top:623px" width="16" height="16"><use href="#chk"/></svg>
<svg class="ic" style="left:941px;top:623px" width="16" height="16"><use href="#ring_g"/></svg>
<svg class="ic" style="left:981px;top:623px" width="16" height="16"><use href="#ring_b"/></svg>
<svg class="ic" style="left:1021px;top:623px" width="16" height="16"><use href="#refresh"/></svg>
<svg class="ic" style="left:1061px;top:623px" width="16" height="16"><use href="#minus"/></svg>
<svg class="ic" style="left:1101px;top:623px" width="16" height="16"><use href="#xdel"/></svg>
<div class="cb" style="left:1144px;top:625px"></div>
<div class="sep" style="top:655px;height:2px"></div>
<svg class="ic" style="left:44.5px;top:676.5px" width="16" height="16"><use href="#drag"/></svg>
<div class="thumb" style="top:662px"><svg width="40" height="40" viewBox="0 0 40 40" style="display:block"><defs><filter id="fj" x="-10%" y="-10%" width="120%" height="120%"><feGaussianBlur stdDeviation="0.9"/></filter></defs><g filter="url(#fj)"><linearGradient id="jbg" x1="0.75" y1="0" x2="0.25" y2="1"><stop offset="0" stop-color="#160200"/><stop offset="0.3" stop-color="#5a1a08"/><stop offset="0.55" stop-color="#9a5426"/><stop offset="0.8" stop-color="#c46a32"/><stop offset="1" stop-color="#dc8a4c"/></linearGradient><rect x="-2" y="-2" width="44" height="44" fill="url(#jbg)"/><path d="M-2,12 Q18,14 42,26" fill="none" stroke="#8a3a18" stroke-width="3" opacity="0.7"/><path d="M8,18 Q22,20 36,28" fill="none" stroke="#a8804a" stroke-width="3.5" opacity="0.6"/><path d="M-2,24 Q18,26 42,36" fill="none" stroke="#c8743a" stroke-width="2.5" opacity="0.6"/><ellipse cx="3" cy="33" rx="6" ry="4" fill="#f0b078" opacity="0.75"/><ellipse cx="24" cy="36" rx="6" ry="3" fill="#e8a870" opacity="0.7"/><circle cx="16.5" cy="27.5" r="2.6" fill="#7a3414"/><circle cx="16.5" cy="27.5" r="1.5" fill="#f4c89a"/><circle cx="13" cy="10" r="1" fill="#c08060" opacity="0.7"/></g></svg></div>
<div class="t name" style="left:135px;top:678px">test</div>
<svg class="ic" style="left:418px;top:677px" width="16" height="16"><use href="#fold"/></svg>
<div class="t" style="left:439px;top:678px">(0)</div>
<svg class="ic" style="left:474px;top:676px" width="16" height="16"><use href="#imgs"/></svg>
<div class="t lnk" style="left:494px;top:678px">(6)</div>
<svg class="ic" style="left:901px;top:675px" width="16" height="16"><use href="#chk"/></svg>
<svg class="ic" style="left:941px;top:675px" width="16" height="16"><use href="#ring_g"/></svg>
<svg class="ic" style="left:981px;top:675px" width="16" height="16"><use href="#ring_b"/></svg>
<svg class="ic" style="left:1021px;top:675px" width="16" height="16"><use href="#refresh"/></svg>
<svg class="ic" style="left:1061px;top:675px" width="16" height="16"><use href="#minus"/></svg>
<svg class="ic" style="left:1101px;top:675px" width="16" height="16"><use href="#xdel"/></svg>
<div class="cb" style="left:1144px;top:677px"></div>
<div class="sep" style="top:707px;height:2px"></div>
<svg class="ic" style="left:44.5px;top:728.5px" width="16" height="16"><use href="#drag"/></svg>
<div class="thumb" style="top:714px"><svg width="40" height="40" viewBox="0 0 40 40" style="display:block"><defs><filter id="fd" x="-10%" y="-10%" width="120%" height="120%"><feGaussianBlur stdDeviation="0.85"/></filter></defs><g filter="url(#fd)"><rect x="-2" y="-2" width="44" height="44" fill="#050304"/><g transform="rotate(-45 24 22)"><ellipse cx="24" cy="22" rx="17" ry="7" fill="#261c22" opacity="0.9"/><ellipse cx="22" cy="22" rx="9" ry="4" fill="#3e3036" opacity="0.9"/></g><circle cx="24.4" cy="25.4" r="0.9" fill="#b8a0aa" opacity="0.55"/><circle cx="24.4" cy="19.2" r="1.0" fill="#b8a0aa" opacity="0.70"/><circle cx="14.5" cy="26.7" r="1.1" fill="#b8a0aa" opacity="0.65"/><circle cx="18.8" cy="34.8" r="1.0" fill="#b8a0aa" opacity="0.61"/><circle cx="13.6" cy="28.8" r="0.5" fill="#b8a0aa" opacity="0.40"/><circle cx="15.6" cy="26.4" r="0.9" fill="#b8a0aa" opacity="0.72"/><circle cx="26.5" cy="20.6" r="1.0" fill="#b8a0aa" opacity="0.53"/><circle cx="24.1" cy="29.8" r="1.2" fill="#b8a0aa" opacity="0.65"/><circle cx="18.8" cy="23.4" r="0.6" fill="#b8a0aa" opacity="0.68"/><circle cx="25.6" cy="22.3" r="1.3" fill="#b8a0aa" opacity="0.72"/><circle cx="11.7" cy="35.3" r="0.9" fill="#b8a0aa" opacity="0.79"/><circle cx="19.3" cy="24.3" r="1.1" fill="#b8a0aa" opacity="0.43"/><circle cx="14.6" cy="33.8" r="1.1" fill="#b8a0aa" opacity="0.36"/><circle cx="16.2" cy="23.1" r="1.1" fill="#b8a0aa" opacity="0.39"/><circle cx="25.9" cy="17.2" r="1.1" fill="#b8a0aa" opacity="0.37"/><circle cx="25.1" cy="17.2" r="0.7" fill="#b8a0aa" opacity="0.43"/><circle cx="37.8" cy="9.1" r="1.2" fill="#b8a0aa" opacity="0.41"/><circle cx="25.5" cy="24.5" r="0.6" fill="#b8a0aa" opacity="0.79"/><circle cx="16.8" cy="29.5" r="0.8" fill="#b8a0aa" opacity="0.45"/><circle cx="12.3" cy="31.0" r="0.7" fill="#b8a0aa" opacity="0.60"/><circle cx="21.8" cy="27.5" r="0.9" fill="#b8a0aa" opacity="0.59"/><circle cx="30.5" cy="10.2" r="1.2" fill="#b8a0aa" opacity="0.71"/><circle cx="17.0" cy="28.4" r="1.3" fill="#b8a0aa" opacity="0.40"/><circle cx="38.0" cy="11.9" r="0.8" fill="#b8a0aa" opacity="0.35"/><circle cx="18.6" cy="29.1" r="1.1" fill="#b8a0aa" opacity="0.43"/><circle cx="21" cy="26" r="1.8" fill="#1a1012"/></g></svg></div>
<div class="t name" style="left:135px;top:730px">theme</div>
<svg class="ic" style="left:418px;top:729px" width="16" height="16"><use href="#fold"/></svg>
<div class="t lnk" style="left:439px;top:730px">(1)</div>
<svg class="ic" style="left:474px;top:728px" width="16" height="16"><use href="#imgs"/></svg>
<div class="t lnk" style="left:494px;top:730px">(7)</div>
<svg class="ic" style="left:901px;top:727px" width="16" height="16"><use href="#chk"/></svg>
<svg class="ic" style="left:941px;top:727px" width="16" height="16"><use href="#ring_g"/></svg>
<svg class="ic" style="left:981px;top:727px" width="16" height="16"><use href="#ring_b"/></svg>
<svg class="ic" style="left:1021px;top:727px" width="16" height="16"><use href="#refresh"/></svg>
<svg class="ic" style="left:1061px;top:727px" width="16" height="16"><use href="#minus"/></svg>
<svg class="ic" style="left:1101px;top:727px" width="16" height="16"><use href="#xdel"/></svg>
<div class="cb" style="left:1144px;top:729px"></div>
<div class="sep" style="top:759px"></div><svg class="ic" style="left:68px;top:800px" width="16" height="16"><use href="#fold"/></svg>
<div class="t" style="left:87px;top:801px">Albums</div>
<svg class="ic" style="left:145px;top:800px" width="16" height="16"><use href="#imgs"/></svg>
<div class="t" style="left:163px;top:801px">Images</div>
<svg class="ic" style="left:219px;top:800px" width="16" height="16"><use href="#fold_dim"/></svg>
<div class="t" style="left:238px;top:801px">Albums (dynamic)</div>
<svg class="ic" style="left:357px;top:800px" width="16" height="16"><use href="#imgs_dim"/></svg>
<div class="t" style="left:375px;top:801px">Images (dynamic)</div>
<svg class="ic" style="left:257px;top:833px" width="16" height="16"><use href="#lock"/></svg>
<div class="t" style="left:275px;top:834px">Has Password</div>
<svg class="ic" style="left:373px;top:833px" width="16" height="16"><use href="#chk"/></svg>
<svg class="ic" style="left:391px;top:833px" width="16" height="16"><use href="#excl"/></svg>
<div class="t" style="left:409px;top:834px">Published/Un-published</div>
<svg class="ic" style="left:559px;top:833px" width="16" height="16"><use href="#ring_g"/></svg>
<svg class="ic" style="left:576px;top:833px" width="16" height="16"><use href="#ring_r"/></svg>
<div class="t" style="left:595px;top:834px">Comments on/off</div>
<svg class="ic" style="left:708px;top:833px" width="16" height="16"><use href="#ring_b"/></svg>
<div class="t" style="left:727px;top:834px">View the album</div>
<svg class="ic" style="left:830px;top:833px" width="16" height="16"><use href="#refresh"/></svg>
<div class="t" style="left:848px;top:834px">Refresh metadata</div>
<svg class="ic" style="left:965px;top:833px" width="16" height="16"><use href="#minus"/></svg>
<div class="t" style="left:983px;top:834px">Reset hit counters</div>
<svg class="ic" style="left:1103px;top:833px" width="16" height="16"><use href="#xdel"/></svg>
<div class="t" style="left:1120px;top:834px">Delete</div>
<div class="btn" style="left:29px;top:863px;width:77px"><svg class="ic" style="left:7px;top:5px" width="16" height="16"><use href="#chk"/></svg><span class="abs" style="left:26px;top:0px">Apply</span></div>
<div class="btn" style="left:113px;top:863px;width:113px"><svg class="ic" style="left:7px;top:6px" width="16" height="16"><use href="#folder"/></svg><span class="abs" style="left:27px;top:0px">New album</span></div>
<div class="abs" style="left:0;top:888px;width:1198px;height:1px;background:#dcdcdc"></div><div class="abs" style="left:0;top:889px;width:1198px;height:1px;background:#eeeeee"></div>

</body></html>
